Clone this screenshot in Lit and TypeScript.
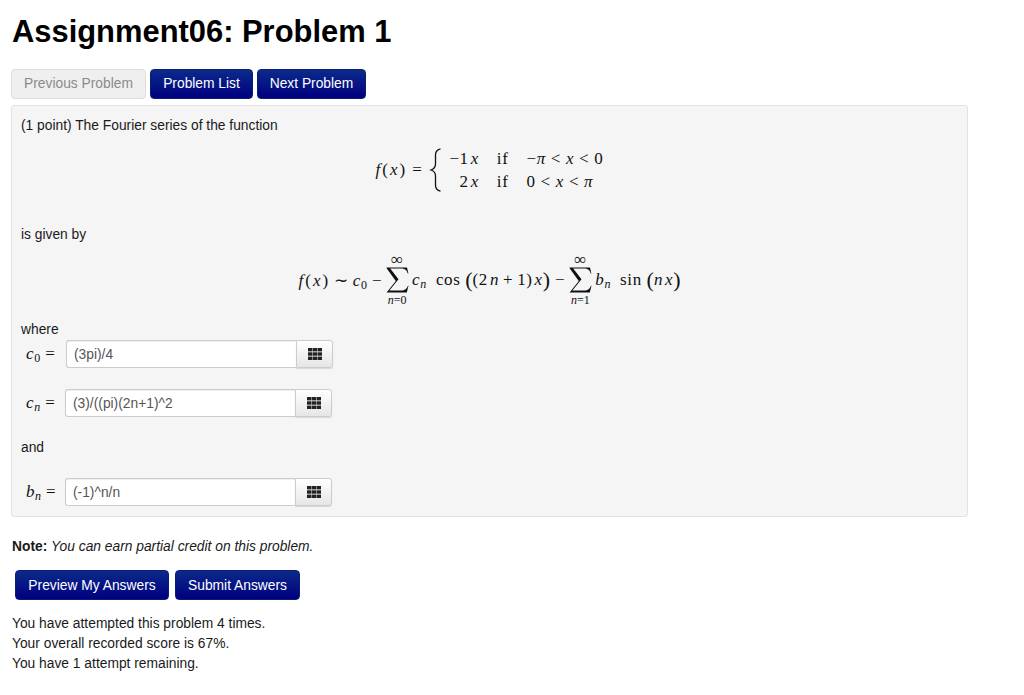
import { LitElement, html, css, svg } from "lit";
import { customElement } from "lit/decorators.js";

const gridIcon = html`<svg width="14" height="12" viewBox="0 0 14 12" aria-hidden="true">
  ${[0, 4.3, 8.6].map((y) => [0, 4.8, 9.6].map((x) => svg`<rect x=${x} y=${y} width="4.4" height="3.4" fill="#222"></rect>`))}
</svg>`;

const sigma = html`<svg class="sigma" width="23" height="26" viewBox="0 0 23 26" aria-hidden="true">
  <path d="M.6 .5H21l1.4 6h-.6C20.800 3 19 1.400 14.500 1.400H4.200L12.500 12.300 3.400 23.600H15C19 23.600 20.900 21.800 21.900 18.800h.6L20.800 25.500H.6L9.800 14 .6 1.200Z" fill="#111"></path>
</svg>`;

const brace = html`<svg class="brace" width="13" height="44" viewBox="0 0 13 44" aria-hidden="true">
  <path d="M11.500 .8C8 1.600 6.500 3.600 6.500 7V16C6.500 19 5 21 2 22C5 23 6.500 25 6.500 28V37C6.500 40.400 8 42.400 11.500 43.200" fill="none" stroke="#111" stroke-width="1.300"></path>
</svg>`;

@customElement("app-root")
export class AppRoot extends LitElement {
  static styles = css`
    :host { display: block; width: 1024px; height: 695px; overflow: hidden; background: #fff; color: #1a1a1a; font-family: "Liberation Sans", Arial, sans-serif; font-size: 13.8px; box-sizing: border-box; padding: 0 12px; }
    h1 { margin: 0; padding-top: 15px; height: 69px; box-sizing: border-box; font-size: 30.9px; line-height: 34px; font-weight: 700; color: #000; }
    .nav { display: flex; gap: 4px; margin-left: -1px; height: 30px; margin-bottom: 6px; }
    .btn { display: flex; align-items: center; justify-content: center; box-sizing: border-box; height: 30px; border-radius: 4px; font-size: 13.8px; color: #fff; background: linear-gradient(#0b2a8a, #00007f); border: 1px solid #0a1f70; }
    .nav .btn { padding-bottom: 1px; }
    .btn.off { color: #8a8a8a; background: #efefef; border-color: #ddd; }
    .w-prev { width: 135px; } .w-list { width: 103px; } .w-next { width: 109px; }
    .w-prev2 { width: 154px; } .w-sub { width: 125px; }
    .well { width: 957px; height: 412px; margin-left: -1px; box-sizing: border-box; background: #f5f5f5; border: 1px solid #e3e3e3; border-radius: 3px; padding: 0 9px; display: flex; flex-direction: column; }
    .line { height: 20px; line-height: 20px; }
    .intro { margin-top: 10px; }
    .m { font-family: "Liberation Serif", "Times New Roman", serif; font-size: 17px; letter-spacing: .6px; color: #111; white-space: nowrap; }
    .m i { font-style: italic; }
    .m sub { font-size: 12px; line-height: 0; vertical-align: -3px; letter-spacing: 0; }
    .fx { letter-spacing: 2px; }
    .display { display: flex; justify-content: center; align-items: center; }
    .d1 { height: 68px; margin-bottom: 21px; gap: 8px; box-sizing: border-box; }
    .d2 { height: 64px; margin-top: 3px; margin-bottom: 8px; }
    .sp { display: inline-block; width: 2px; }
    .op { display: inline-block; width: 5px; }
    .op.n { width: 4px; }
    .brace { flex: none; margin: 0 -1px; }
    .cases { display: grid; grid-template-columns: auto auto auto; column-gap: 18px; row-gap: 3px; }
    .cases .r { text-align: right; }
    .sum { display: inline-flex; flex-direction: column; align-items: center; width: 24px; margin: 0 3px; }
    .sigma { display: block; margin: 1px 0; }
    .sum .s { font-size: 12px; line-height: 13px; letter-spacing: 0; }
    .sum .inf { font-size: 17px; line-height: 12px; }
    .big { font-size: 22px; line-height: 20px; font-weight: 100; vertical-align: -2px; letter-spacing: 0; }
    .row { display: flex; align-items: center; height: 28px; }
    .lab { width: 45px; padding-left: 5px; box-sizing: border-box; }
    .row.shift .group { margin-left: -1px; }
    .group { display: flex; width: 267px; height: 28px; box-sizing: border-box; }
    .group input { width: 230px; box-sizing: border-box; height: 28px; border: 1px solid #ccc; border-right: none; border-radius: 3px 0 0 3px; background: #fff; padding: 0 7px; font: 13.8px "Liberation Sans", Arial, sans-serif; color: #555; box-shadow: inset 0 1px 1px rgba(0,0,0,.07); outline: none; }
    .addon { width: 37px; height: 28px; box-sizing: border-box; display: flex; align-items: center; justify-content: center; border: 1px solid #ccc; border-radius: 0 3px 3px 0; background: linear-gradient(#fff, #e6e6e6); box-shadow: 0 1px 1px rgba(0,0,0,.12); }
    .gap-a { height: 21px; }
    .and { margin-top: 21px; }
    .gap-b { height: 20px; }
    .note { margin-top: 20px; line-height: 20px; height: 20px; color: #1a1a1a; }
    .actions { display: flex; gap: 6px; margin: 13px 0 14px 3px; }
    .status { line-height: 20px; }
  `;

  private row(label: unknown, value: string, shift = false) {
    return html`<div class="row ${shift ? "shift" : ""}"><span class="lab m">${label}</span>
      <div class="group"><input .value=${value} aria-label="answer" /><span class="addon">${gridIcon}</span></div></div>`;
  }

  private sum(low: string) {
    return html`<span class="sum"><span class="s inf">∞</span>${sigma}<span class="s"><i>n</i>=${low}</span></span>`;
  }

  render() {
    return html`
      <h1>Assignment06: Problem 1</h1>
      <div class="nav">
        <div class="btn off w-prev">Previous Problem</div>
        <div class="btn w-list">Problem List</div>
        <div class="btn w-next">Next Problem</div>
      </div>
      <div class="well">
        <div class="line intro">(1 point) The Fourier series of the function</div>
        <div class="display d1 m">
          <span><span class="fx"><i>f</i>(<i>x</i>)</span><span class="op"></span>=</span>
          ${brace}
          <div class="cases">
            <span class="r">−1<span class="sp"></span><i>x</i></span><span>if</span><span>−<i>π</i><span class="op"></span>&lt;<span class="op"></span><i>x</i><span class="op"></span>&lt;<span class="op"></span>0</span>
            <span class="r">2<span class="sp"></span><i>x</i></span><span>if</span><span>0<span class="op"></span>&lt;<span class="op"></span><i>x</i><span class="op"></span>&lt;<span class="op"></span><i>π</i></span>
          </div>
        </div>
        <div class="line">is given by</div>
        <div class="display d2 m">
          <span><span class="fx"><i>f</i>(<i>x</i>)</span><span class="op n"></span>∼<span class="op n"></span><i>c</i><sub>0</sub><span class="op"></span>−</span>
          ${this.sum("0")}
          <span><i>c<sub>n</sub></i>&nbsp; cos <span class="big">(</span>(2<span class="sp"></span><i>n</i><span class="op n"></span>+<span class="op n"></span>1)<span class="sp"></span><i>x</i><span class="big">)</span><span class="op"></span>−</span>
          ${this.sum("1")}
          <span><i>b<sub>n</sub></i>&nbsp; sin <span class="big">(</span><i>n</i><span class="sp"></span><i>x</i><span class="big">)</span></span>
        </div>
        <div class="line">where</div>
        ${this.row(html`<i>c</i><sub>0</sub><span class="op"></span>=`, "(3pi)/4")}
        <div class="gap-a"></div>
        ${this.row(html`<i>c<sub>n</sub></i><span class="op"></span>=`, "(3)/((pi)(2n+1)^2", true)}
        <div class="line and">and</div>
        <div class="gap-b"></div>
        ${this.row(html`<i>b<sub>n</sub></i><span class="op"></span>=`, "(-1)^n/n", true)}
      </div>
      <div class="note"><b>Note:</b> <i>You can earn partial credit on this problem.</i></div>
      <div class="actions">
        <div class="btn w-prev2">Preview My Answers</div>
        <div class="btn w-sub">Submit Answers</div>
      </div>
      <div class="status">You have attempted this problem 4 times.<br />Your overall recorded score is 67%.<br />You have 1 attempt remaining.</div>
    `;
  }
}
